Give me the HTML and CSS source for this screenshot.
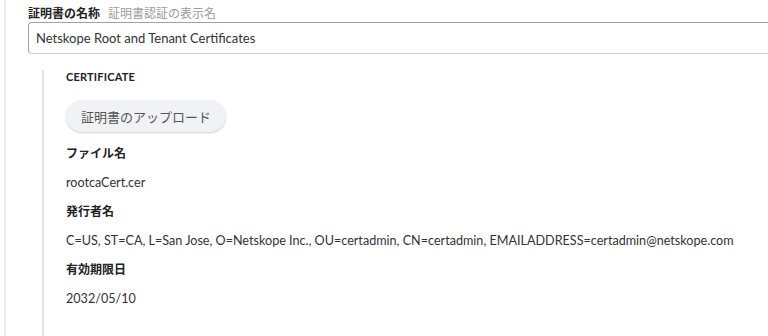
FILE: index.html
```html
<!DOCTYPE html>
<html lang="ja">
<head>
<meta charset="utf-8">
<link rel="stylesheet" href="styles.css">
</head>
<body>
<div class="page">
  <div class="field-head">
    <span class="field-label">証明書の名称</span>
    <span class="field-hint">証明書認証の表示名</span>
  </div>
  <div class="input">Netskope Root and Tenant Certificates</div>
  <div class="section">
    <div class="section-title">CERTIFICATE</div>
    <button class="upload">証明書のアップロード</button>
    <div class="item-label">ファイル名</div>
    <div class="item-value">rootcaCert.cer</div>
    <div class="item-label">発行者名</div>
    <div class="item-value">C=US, ST=CA, L=San Jose, O=Netskope Inc., OU=certadmin, CN=certadmin, EMAILADDRESS=certadmin@netskope.com</div>
    <div class="item-label">有効期限日</div>
    <div class="item-value">2032/05/10</div>
  </div>
</div>
</body>
</html>
```

FILE: styles.css
```css
html, body {
  margin: 0;
  padding: 0;
  background: #ffffff;
}
body {
  font-family: "Lato", "Noto Sans CJK JP", sans-serif;
  color: #333333;
  width: 768px;
  height: 336px;
  overflow: hidden;
}
.page {
  margin-left: 4px;
  border-left: 2px solid #ececee;
  padding-left: 22px;
  padding-top: 5px;
  height: 336px;
  box-sizing: border-box;
  display: flex;
  flex-direction: column;
  overflow: hidden;
}
.field-head {
  display: flex;
  align-items: baseline;
  gap: 8px;
  height: 17px;
  font-size: 12px;
  line-height: 17px;
}
.field-label {
  font-weight: 700;
  color: #222;
}
.field-hint {
  color: #9a9a9a;
}
.input {
  height: 32px;
  box-sizing: border-box;
  border: 1px solid #a2a2a6;
  border-bottom-color: #cfcfd2;
  border-right: none;
  border-radius: 4px 0 0 4px;
  padding-left: 7px;
  font-size: 13px;
  line-height: 30px;
  color: #333;
}
.section {
  margin-top: 16px;
  margin-left: 14px;
  border-left: 2px solid #e6e6ea;
  padding-left: 22px;
  flex: 1;
}
.section-title {
  font-size: 11px;
  font-weight: 700;
  letter-spacing: 0.2px;
  color: #222;
  line-height: 14px;
}
.upload {
  display: block;
  margin-top: 16px;
  height: 32px;
  padding: 0 15px;
  border: none;
  border-radius: 16px;
  background: #f0f2f5;
  box-shadow: 0 1px 2px rgba(0,0,0,0.2);
  font-family: "Lato", "Noto Sans CJK JP", sans-serif;
  font-size: 13px;
  color: #555;
}
.item-label {
  margin-top: 14px;
  font-size: 12px;
  font-weight: 700;
  color: #222;
  line-height: 15px;
}
.item-value {
  margin-top: 14px;
  font-size: 12.6px;
  color: #333;
  line-height: 15px;
  white-space: nowrap;
}
```
